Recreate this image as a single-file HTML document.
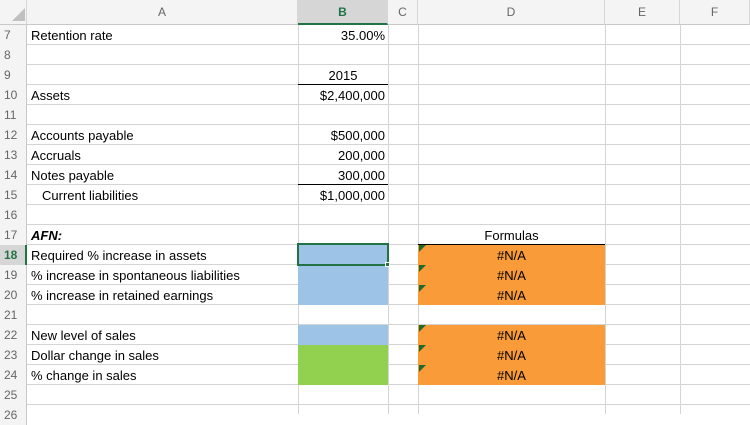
<!DOCTYPE html><html><head><style>
body{margin:0;width:750px;height:414px;overflow:hidden;background:#fff;font-family:"Liberation Sans",Arial,sans-serif;font-size:13px;color:#000;position:relative}
div{position:absolute;box-sizing:border-box}
.h{top:0;height:25px;background:#f4f4f4;border-right:1px solid #d6d6d6;border-bottom:1px solid #c8c8c8;color:#666;font-size:12px;text-align:center;line-height:25px}
.vl{top:25px;bottom:0;width:1px;background:#d4d4d4}
.hl{left:0;right:0;height:1px;background:#d4d4d4}
.rn{left:0;width:27px;height:20px;color:#666;font-size:12px;line-height:20px;padding-left:4px;background:#f4f4f4;border-right:1px solid #c8c8c8}
.t{height:20px;line-height:21px;white-space:nowrap}
.r{text-align:right}
.c{text-align:center}
.tri{width:0;height:0;border-top:7px solid #1e6b2e;border-right:7px solid transparent}
</style></head><body>
<div class="h" style="left:0;width:27px"></div>
<div style="left:12px;top:8px;width:0;height:0;border-bottom:13px solid #c0c0c0;border-left:13px solid transparent"></div>
<div class="h" style="left:27px;width:271px">A</div>
<div class="h" style="left:298px;width:90px;background:#d6d6d6;color:#217346;font-weight:bold;border-bottom:2px solid #217346">B</div>
<div class="h" style="left:388px;width:30px">C</div>
<div class="h" style="left:418px;width:187px">D</div>
<div class="h" style="left:605px;width:75px">E</div>
<div class="h" style="left:680px;width:70px">F</div>
<div class="vl" style="left:298px"></div><div class="vl" style="left:388px"></div><div class="vl" style="left:418px"></div><div class="vl" style="left:605px"></div><div class="vl" style="left:680px"></div>
<div class="hl" style="top:44px"></div><div class="hl" style="top:64px"></div><div class="hl" style="top:84px"></div><div class="hl" style="top:104px"></div><div class="hl" style="top:124px"></div><div class="hl" style="top:144px"></div><div class="hl" style="top:164px"></div><div class="hl" style="top:184px"></div><div class="hl" style="top:204px"></div><div class="hl" style="top:224px"></div><div class="hl" style="top:244px"></div><div class="hl" style="top:264px"></div><div class="hl" style="top:284px"></div><div class="hl" style="top:304px"></div><div class="hl" style="top:324px"></div><div class="hl" style="top:344px"></div><div class="hl" style="top:364px"></div><div class="hl" style="top:384px"></div><div class="hl" style="top:404px"></div>
<!-- fills -->
<div style="left:298px;top:245px;width:90px;height:60px;background:#9dc3e6"></div>
<div style="left:298px;top:325px;width:90px;height:20px;background:#9dc3e6"></div>
<div style="left:298px;top:345px;width:90px;height:40px;background:#92d050"></div>
<div style="left:418px;top:245px;width:187px;height:60px;background:#f99b38"></div>
<div style="left:418px;top:325px;width:187px;height:60px;background:#f99b38"></div>
<div style="left:297px;top:243px;width:92px;height:23px;border:2px solid #217346"></div>
<div style="left:385px;top:262px;width:5px;height:5px;background:#217346;border:1px solid #fff"></div>
<!-- row numbers -->
<div class="rn" style="top:25px">7</div><div class="rn" style="top:45px">8</div><div class="rn" style="top:65px">9</div><div class="rn" style="top:85px">10</div><div class="rn" style="top:105px">11</div><div class="rn" style="top:125px">12</div><div class="rn" style="top:145px">13</div><div class="rn" style="top:165px">14</div><div class="rn" style="top:185px">15</div><div class="rn" style="top:205px">16</div><div class="rn" style="top:225px">17</div><div class="rn" style="top:245px;background:#d6d6d6;color:#217346;font-weight:bold;border-right:2px solid #217346">18</div><div class="rn" style="top:265px">19</div><div class="rn" style="top:285px">20</div><div class="rn" style="top:305px">21</div><div class="rn" style="top:325px">22</div><div class="rn" style="top:345px">23</div><div class="rn" style="top:365px">24</div><div class="rn" style="top:385px">25</div><div class="rn" style="top:405px">26</div>
<!-- col A -->
<div class="t" style="left:31px;top:25px">Retention rate</div>
<div class="t" style="left:31px;top:85px">Assets</div>
<div class="t" style="left:31px;top:125px">Accounts payable</div>
<div class="t" style="left:31px;top:145px">Accruals</div>
<div class="t" style="left:31px;top:165px">Notes payable</div>
<div class="t" style="left:42px;top:185px">Current liabilities</div>
<div class="t" style="left:31px;top:225px;font-weight:bold;font-style:italic">AFN:</div>
<div class="t" style="left:31px;top:245px">Required % increase in assets</div>
<div class="t" style="left:31px;top:265px">% increase in spontaneous liabilities</div>
<div class="t" style="left:31px;top:285px">% increase in retained earnings</div>
<div class="t" style="left:31px;top:325px">New level of sales</div>
<div class="t" style="left:31px;top:345px">Dollar change in sales</div>
<div class="t" style="left:31px;top:365px">% change in sales</div>
<!-- col B -->
<div class="t r" style="left:298px;width:87px;top:25px">35.00%</div>
<div class="t c" style="left:298px;width:90px;top:65px">2015</div>
<div style="left:298px;top:84px;width:90px;height:1px;background:#000"></div>
<div class="t r" style="left:298px;width:87px;top:85px">$2,400,000</div>
<div class="t r" style="left:298px;width:87px;top:125px">$500,000</div>
<div class="t r" style="left:298px;width:87px;top:145px">200,000</div>
<div class="t r" style="left:298px;width:87px;top:165px">300,000</div>
<div style="left:298px;top:184px;width:90px;height:1px;background:#000"></div>
<div class="t r" style="left:298px;width:87px;top:185px">$1,000,000</div>
<!-- col D -->
<div class="t c" style="left:418px;width:187px;top:225px">Formulas</div>
<div style="left:418px;top:244px;width:187px;height:1px;background:#000"></div>
<div class="t c" style="left:418px;width:187px;top:245px">#N/A</div>
<div class="t c" style="left:418px;width:187px;top:265px">#N/A</div>
<div class="t c" style="left:418px;width:187px;top:285px">#N/A</div>
<div class="t c" style="left:418px;width:187px;top:325px">#N/A</div>
<div class="t c" style="left:418px;width:187px;top:345px">#N/A</div>
<div class="t c" style="left:418px;width:187px;top:365px">#N/A</div>
<div class="tri" style="left:419px;top:245px"></div><div class="tri" style="left:419px;top:265px"></div><div class="tri" style="left:419px;top:285px"></div><div class="tri" style="left:419px;top:325px"></div><div class="tri" style="left:419px;top:345px"></div><div class="tri" style="left:419px;top:365px"></div>
</body></html>
